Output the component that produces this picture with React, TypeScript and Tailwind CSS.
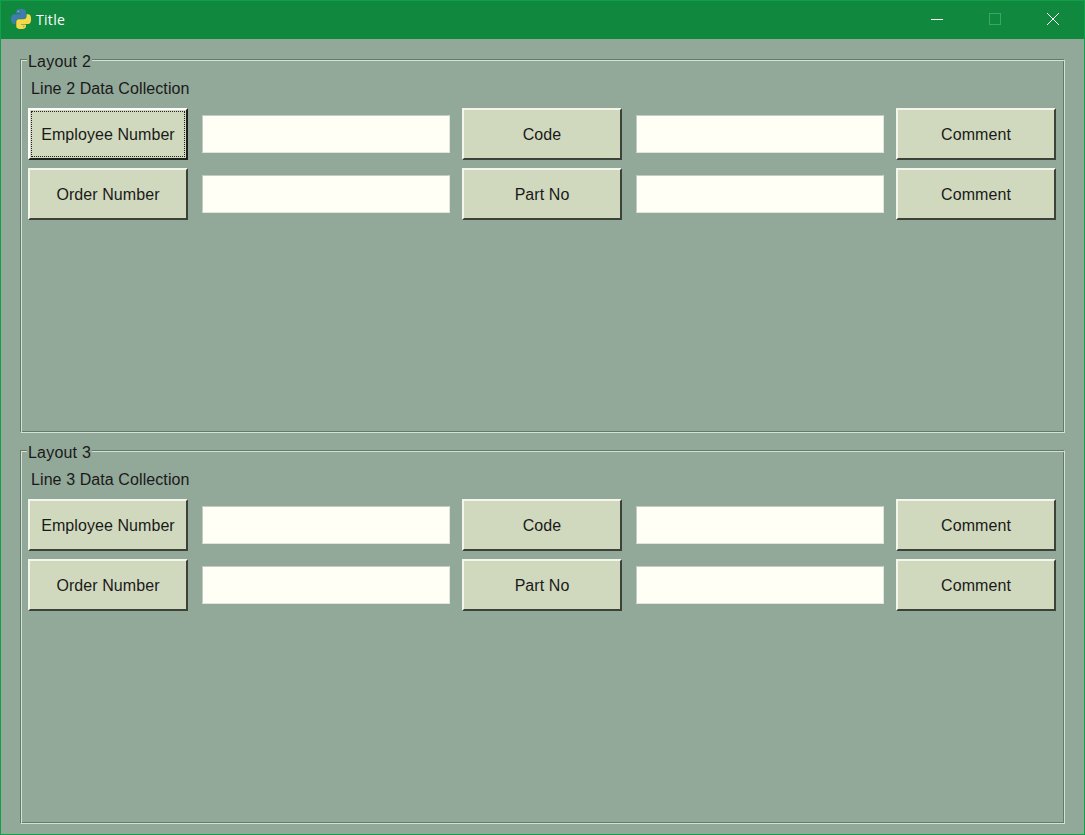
const rows = [
  ["Employee Number", "Code", "Comment"],
  ["Order Number", "Part No", "Comment"],
];

function PythonLogo() {
  return (
    <svg width="20" height="20" viewBox="0 0 110 110" className="shrink-0">
      <path
        fill="#3f7db0"
        d="M54.9 0C50.3 0 45.9.4 42.1 1.1 30.8 3.1 28.8 7.2 28.8 14.9V25h26.6v3.4H18.8C11.1 28.4 4.3 33 2.2 41.8c-2.4 10.1-2.5 16.4 0 26.9 1.9 7.8 6.4 13.4 14.1 13.4h9.1V70.7c0-8.8 7.6-16.5 16.6-16.5h26.6c7.4 0 13.3-6.1 13.3-13.5V14.9c0-7.2-6.1-12.6-13.3-13.8C64.1.3 59.5 0 54.9 0z"
      />
      <path
        fill="#f6d84a"
        d="M85.6 28.4v11.8c0 9.1-7.8 16.8-16.6 16.8H42.4c-7.3 0-13.3 6.2-13.3 13.5v25.3c0 7.2 6.3 11.4 13.3 13.5 8.4 2.5 16.5 2.9 26.6 0 6.7-1.9 13.3-5.8 13.3-13.5V85.7H55.7v-3.4h39.9c7.7 0 10.6-5.4 13.3-13.4 2.8-8.3 2.7-16.2 0-26.9-1.9-7.7-5.6-13.4-13.3-13.4z"
      />
      <circle cx="40" cy="13" r="4" fill="#a9c6d8" />
      <circle cx="70" cy="96" r="4" fill="#8fae55" />
    </svg>
  );
}

function TitleBar() {
  return (
    <div className="flex h-[38px] shrink-0 items-center bg-[#10893e] pb-[2px] pl-[10px] text-white">
      <PythonLogo />
      <span className="ml-[5px] font-['Open_Sans',sans-serif] text-[14px] tracking-[0.3px]">Title</span>
      <div className="ml-auto mr-[2px] flex h-full">
        <div className="flex w-[58px] items-center justify-center">
          <svg width="12" height="12" viewBox="0 0 12 12">
            <path d="M0 6.5h12" stroke="#fff" strokeWidth="1" />
          </svg>
        </div>
        <div className="flex w-[58px] items-center justify-center">
          <svg width="12" height="12" viewBox="0 0 12 12">
            <rect x="0.5" y="0.5" width="11" height="11" fill="none" stroke="#3fa566" strokeWidth="1" />
          </svg>
        </div>
        <div className="flex w-[58px] items-center justify-center">
          <svg width="12" height="12" viewBox="0 0 12 12">
            <path d="M0 0l12 12M12 0L0 12" stroke="#fff" strokeWidth="1" />
          </svg>
        </div>
      </div>
    </div>
  );
}

function RaisedButton({ label, focused }: { label: string; focused?: boolean }) {
  return (
    <button
      className={
        focused
          ? "relative h-[52px] w-[160px] shrink-0 border-2 border-t-[#ffffff] border-l-[#ffffff] border-r-[#1e211c] border-b-[#1e211c] bg-[#d0d9bd] pt-[2px] text-[16px] tracking-[0.07px] text-[#1a1a1a]"
          : "relative h-[52px] w-[160px] shrink-0 border-2 border-t-[#f4f6ec] border-l-[#f4f6ec] border-r-[#3c4238] border-b-[#3c4238] bg-[#d0d9bd] pt-[2px] text-[16px] tracking-[0.07px] text-[#1a1a1a]"
      }
    >
      {label}
      {focused && (
        <span className="absolute inset-[1px] border border-dotted border-[#222222]" />
      )}
    </button>
  );
}

function Field() {
  return (
    <input
      type="text"
      className="h-[38px] w-[248px] shrink-0 border border-t-[#c4ccc3] border-l-[#c4ccc3] border-r-[#dfe6da] border-b-[#dfe6da] bg-[#fffff6] outline-none"
    />
  );
}

function Group({ title, line, focusFirst }: { title: string; line: string; focusFirst?: boolean }) {
  return (
    <div className="relative h-[374px] w-[1045px] border border-t-[#64786b] border-l-[#64786b] border-r-[#d3e2d6] border-b-[#d3e2d6] px-[7px] shadow-[inset_1px_1px_0_#d3e2d6,inset_-1px_-1px_0_#64786b]">
      <span className="absolute -top-[7px] left-[6px] bg-[#92a899] px-[1px] leading-[18px] tracking-[0.2px]">{title}</span>
      <div className="ml-[3px] mt-[20px] leading-[18px] tracking-[0.09px]">{line}</div>
      <div className="mt-[10px] flex flex-col gap-[8px]">
        {rows.map((row, i) => (
          <div key={i} className="flex items-center">
            <RaisedButton label={row[0]} focused={focusFirst && i === 0} />
            <div className="ml-[14px]"><Field /></div>
            <div className="ml-[12px]"><RaisedButton label={row[1]} /></div>
            <div className="ml-[14px]"><Field /></div>
            <div className="ml-[12px]"><RaisedButton label={row[2]} /></div>
          </div>
        ))}
      </div>
    </div>
  );
}

export default function App() {
  return (
    <div className="flex h-[835px] w-[1085px] flex-col border border-[#10a04a] bg-[#92a899] font-['Liberation_Sans',Arial,sans-serif] text-[16px] text-[#1a1a1a]">
      <TitleBar />
      <div className="flex flex-col gap-[17px] pl-[19px] pt-[20px]">
        <Group title="Layout 2" line="Line 2 Data Collection" focusFirst />
        <Group title="Layout 3" line="Line 3 Data Collection" />
      </div>
    </div>
  );
}
